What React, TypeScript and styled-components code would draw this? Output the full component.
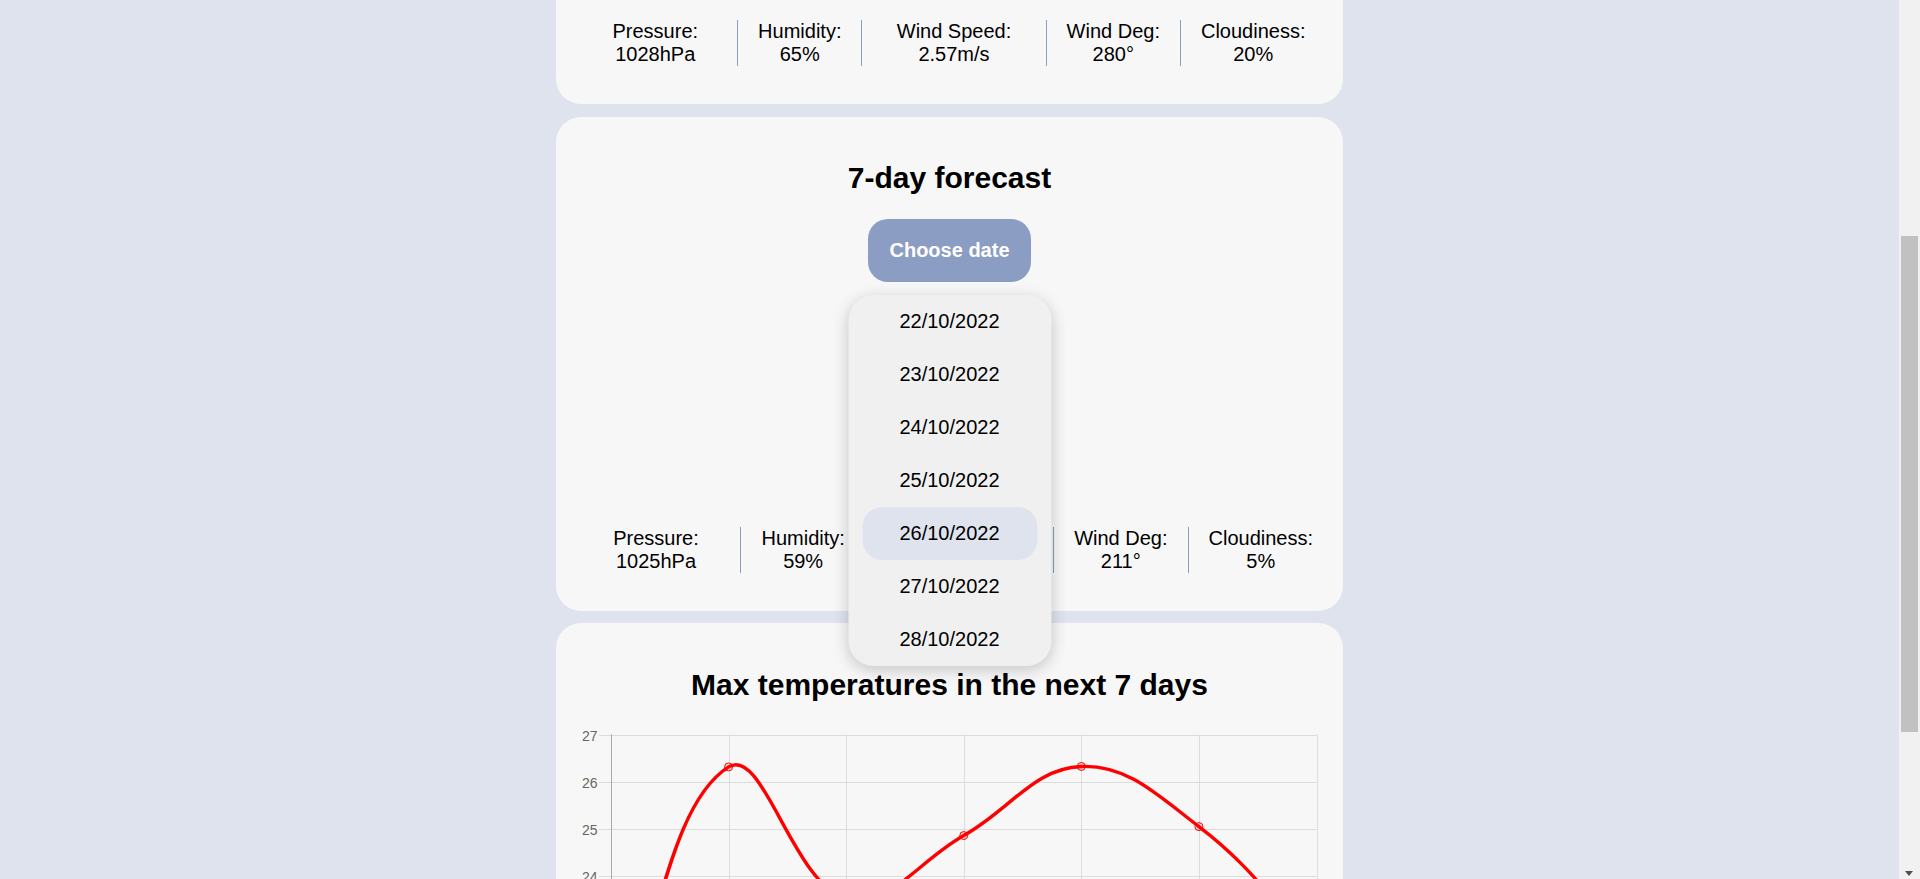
import React from "react";
import styled, { createGlobalStyle } from "styled-components";

const GlobalStyle = createGlobalStyle`
  body {
    margin: 0;
    background: #dfe3ee;
    font-family: "Liberation Sans", Arial, sans-serif;
    color: #000;
  }
`;

type Stat = { label: string; value: string; pad: number };

const current: Stat[] = [
  { label: "Pressure:", value: "1028hPa", pad: 39 },
  { label: "Humidity:", value: "65%", pad: 20 },
  { label: "Wind Speed:", value: "2.57m/s", pad: 34.3 },
  { label: "Wind Deg:", value: "280°", pad: 20 },
  { label: "Cloudiness:", value: "20%", pad: 20 },
];

const forecast: Stat[] = [
  { label: "Pressure:", value: "1025hPa", pad: 41.7 },
  { label: "Humidity:", value: "59%", pad: 20 },
  { label: "Wind Speed:", value: "3.09m/s", pad: 36.4 },
  { label: "Wind Deg:", value: "211°", pad: 20 },
  { label: "Cloudiness:", value: "5%", pad: 20 },
];

const dates = [
  "22/10/2022",
  "23/10/2022",
  "24/10/2022",
  "25/10/2022",
  "26/10/2022",
  "27/10/2022",
  "28/10/2022",
];

const maxTemps = [20.3, 26.31, 23.5, 24.85, 26.32, 25.04, 22.5];

// chart geometry (px inside the svg)
const CH = {
  width: 751,
  height: 390,
  left: 37,
  right: 742.5,
  top: 16.5,
  unit: 47,
  max: 27,
  min: 20,
};

const xAt = (i: number) => CH.left + (i * (CH.right - CH.left)) / 6;
const yAt = (v: number) => CH.top + (CH.max - v) * CH.unit;

type Pt = { x: number; y: number };

// same bezier as chart.js splineCurve
const curvePath = (pts: Pt[], t = 0.4) => {
  const cps = pts.map((cur, i) => {
    const prev = pts[i - 1] || cur;
    const next = pts[i + 1] || cur;
    const d01 = Math.hypot(cur.x - prev.x, cur.y - prev.y);
    const d12 = Math.hypot(next.x - cur.x, next.y - cur.y);
    const s01 = d01 + d12 ? d01 / (d01 + d12) : 0;
    const s12 = d01 + d12 ? d12 / (d01 + d12) : 0;
    return {
      prev: { x: cur.x - t * s01 * (next.x - prev.x), y: cur.y - t * s01 * (next.y - prev.y) },
      next: { x: cur.x + t * s12 * (next.x - prev.x), y: cur.y + t * s12 * (next.y - prev.y) },
    };
  });
  let d = `M${pts[0].x},${pts[0].y}`;
  for (let i = 1; i < pts.length; i++) {
    const a = cps[i - 1].next;
    const b = cps[i].prev;
    d += ` C${a.x},${a.y} ${b.x},${b.y} ${pts[i].x},${pts[i].y}`;
  }
  return d;
};

const Page = styled.div`
  display: flex;
  flex-direction: column;
  align-items: center;
  gap: 12.5px;
  padding: 0 21px 20px 0;
`;

const Card = styled.section<{ $flush?: boolean }>`
  width: 787px;
  box-sizing: border-box;
  background: #f7f7f7;
  border-radius: ${(p) => (p.$flush ? "0 0 25px 25px" : "25px")};
  padding: ${(p) => (p.$flush ? "20px" : "44.5px")} 0 38px;
  display: flex;
  flex-direction: column;
  align-items: center;
`;

const Title = styled.h2`
  margin: 0;
  font-size: 30px;
  font-weight: 700;
  line-height: normal;
`;

const Picker = styled.div`
  position: relative;
  margin-top: 24px;
`;

const ChooseButton = styled.button`
  border: none;
  border-radius: 20px;
  background: #8b9dc3;
  color: #fff;
  font-family: inherit;
  font-size: 20px;
  font-weight: 700;
  line-height: 23px;
  padding: 20px 21px;
  cursor: pointer;
`;

const DateMenu = styled.ul`
  position: absolute;
  z-index: 5;
  top: calc(100% + 12.5px);
  left: 50%;
  transform: translateX(-50%);
  width: 203px;
  margin: 0;
  padding: 0;
  list-style: none;
  background: #f0f0f0;
  border-radius: 25px;
  box-shadow: 0 4px 16px rgba(0, 0, 0, 0.2);
`;

const DateOption = styled.li<{ $active?: boolean }>`
  margin: 0 14px;
  padding: 15px 0;
  font-size: 20px;
  line-height: 23px;
  text-align: center;
  border-radius: 20px;
  background: ${(p) => (p.$active ? "#dfe3ee" : "transparent")};
  cursor: pointer;
`;

const ForecastBody = styled.div`
  height: 244.5px;
  display: flex;
  flex-direction: column;
  align-items: center;
  justify-content: center;
  gap: 6px;
`;

const Temp = styled.div`
  font-size: 28px;
  font-weight: 700;
`;

const Desc = styled.div`
  font-size: 18px;
`;

const StatsRow = styled.div<{ $start: number }>`
  align-self: stretch;
  display: flex;
  padding-left: ${(p) => p.$start}px;
`;

const StatItem = styled.div<{ $pad: number }>`
  padding: 0 ${(p) => p.$pad}px;
  font-size: 20px;
  line-height: 23px;
  text-align: center;
  white-space: nowrap;
  & + & {
    border-left: 1px solid #8b9dc3;
  }
`;

const ChartSvg = styled.svg`
  display: block;
  margin-top: 16px;
  font-family: "Liberation Sans", Arial, sans-serif;
`;

// window scrollbar as it shows in the screenshot
const ScrollTrack = styled.div`
  position: fixed;
  top: 0;
  right: 0;
  width: 21px;
  height: 100vh;
  background: #f1f1f1;
`;

const ScrollThumb = styled.div`
  position: absolute;
  top: 236px;
  left: 2px;
  width: 17px;
  height: 496px;
  background: #c1c1c1;
`;

const ScrollArrow = styled.div`
  position: absolute;
  bottom: 3px;
  left: 6px;
  width: 0;
  height: 0;
  border-left: 4.5px solid transparent;
  border-right: 4.5px solid transparent;
  border-top: 5px solid #505050;
`;

const Stats = ({ items, start }: { items: Stat[]; start: number }) => (
  <StatsRow $start={start}>
    {items.map((s) => (
      <StatItem key={s.label} $pad={s.pad}>
        <div>{s.label}</div>
        <div>{s.value}</div>
      </StatItem>
    ))}
  </StatsRow>
);

const WeatherIcon = () => (
  <svg width="90" height="70" viewBox="0 0 90 70">
    <circle cx="58" cy="24" r="16" fill="#f5b82e" />
    <path
      d="M22 60h44a14 14 0 0 0 0-28 20 20 0 0 0-38 4 12 12 0 0 0-6 24z"
      fill="#d6dbe6"
    />
  </svg>
);

const TempChart = () => {
  const pts = maxTemps.map((v, i) => ({ x: xAt(i), y: yAt(v) }));
  const ticks = [27, 26, 25, 24, 23, 22, 21, 20];
  const bottom = yAt(CH.min);
  return (
    <ChartSvg width={CH.width} height={CH.height}>
      {ticks.map((t) => {
        const y = Math.round(yAt(t)) + 0.5;
        return (
          <g key={t}>
            <line x1={25} x2={CH.right} y1={y} y2={y} stroke="#dcdcdc" />
            <text x={23.5} y={y + 5} textAnchor="end" fontSize="14" fill="#666">
              {t}
            </text>
          </g>
        );
      })}
      {dates.map((d, i) => {
        const x = Math.round(xAt(i)) + 0.5;
        return (
          <g key={d}>
            <line
              x1={x}
              x2={x}
              y1={CH.top}
              y2={bottom + 8}
              stroke={i === 0 ? "#a9a9a9" : "#dcdcdc"}
            />
            <text x={x} y={bottom + 26} textAnchor="middle" fontSize="14" fill="#666">
              {d.slice(0, 5)}
            </text>
          </g>
        );
      })}
      <path d={curvePath(pts)} fill="none" stroke="#ff0000" strokeWidth="3.4" />
      {pts.map((p, i) => (
        <circle
          key={i}
          cx={p.x}
          cy={p.y}
          r="4"
          fill="rgba(255, 0, 0, 0.12)"
          stroke="#ff0000"
          strokeWidth="1"
        />
      ))}
    </ChartSvg>
  );
};

export default function App() {
  return (
    <>
      <GlobalStyle />
      <Page>
        <Card $flush>
          <Stats items={current} start={17.5} />
        </Card>

        <Card>
          <Title>7-day forecast</Title>
          <Picker>
            <ChooseButton>Choose date</ChooseButton>
            <DateMenu>
              {dates.map((d, i) => (
                <DateOption key={d} $active={i === 4}>
                  {d}
                </DateOption>
              ))}
            </DateMenu>
          </Picker>
          <ForecastBody>
            <WeatherIcon />
            <Temp>24°C</Temp>
            <Desc>few clouds</Desc>
          </ForecastBody>
          <Stats items={forecast} start={15.5} />
        </Card>

        <Card>
          <Title>Max temperatures in the next 7 days</Title>
          <TempChart />
        </Card>
      </Page>
      <ScrollTrack>
        <ScrollThumb />
        <ScrollArrow />
      </ScrollTrack>
    </>
  );
}
